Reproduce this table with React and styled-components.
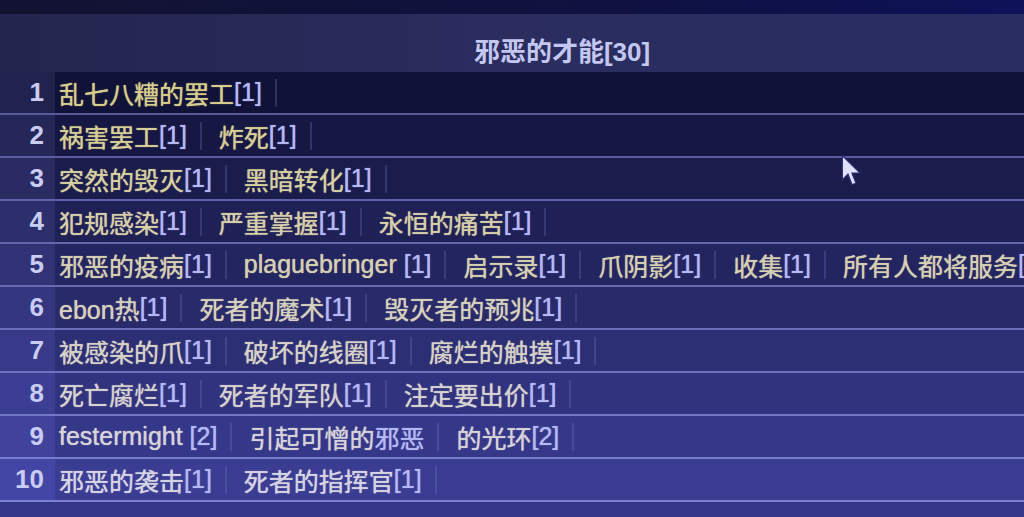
import React from "react";
import styled, { createGlobalStyle } from "styled-components";

const rows = [
  [{ t: "乱七八糟的罢工", n: 1 }],
  [{ t: "祸害罢工", n: 1 }, { t: "炸死", n: 1 }],
  [{ t: "突然的毁灭", n: 1 }, { t: "黑暗转化", n: 1 }],
  [{ t: "犯规感染", n: 1 }, { t: "严重掌握", n: 1 }, { t: "永恒的痛苦", n: 1 }],
  [
    { t: "邪恶的疫病", n: 1 },
    { t: "plaguebringer ", n: 1 },
    { t: "启示录", n: 1 },
    { t: "爪阴影", n: 1 },
    { t: "收集", n: 1 },
    { t: "所有人都将服务", n: 1 },
  ],
  [{ t: "ebon热", n: 1 }, { t: "死者的魔术", n: 1 }, { t: "毁灭者的预兆", n: 1 }],
  [{ t: "被感染的爪", n: 1 }, { t: "破坏的线圈", n: 1 }, { t: "腐烂的触摸", n: 1 }],
  [{ t: "死亡腐烂", n: 1 }, { t: "死者的军队", n: 1 }, { t: "注定要出价", n: 1 }],
  [{ t: "festermight ", n: 2 }, { t: "引起可憎的", hl: "邪恶" }, { t: "的光环", n: 2 }],
  [{ t: "邪恶的袭击", n: 1 }, { t: "死者的指挥官", n: 1 }],
];

// screen photo gets lighter / bluer towards the bottom
function mix(a, b, t) {
  const pa = a.match(/\w\w/g).map((h) => parseInt(h, 16));
  const pb = b.match(/\w\w/g).map((h) => parseInt(h, 16));
  const c = pa.map((v, i) => Math.round(v + (pb[i] - v) * t));
  return `rgb(${c.join(",")})`;
}

const GlobalStyle = createGlobalStyle`
  html, body {
    margin: 0;
    padding: 0;
    background: #0e1033;
  }
`;

const Page = styled.div`
  width: 1024px;
  height: 517px;
  overflow: hidden;
  position: relative;
  display: flex;
  flex-direction: column;
  background: #35368a;
  font-family: "Liberation Sans", "Noto Sans CJK SC", sans-serif;
`;

const TopStrip = styled.div`
  height: 14px;
  flex: none;
  background: linear-gradient(90deg, #121332 0%, #0f1140 60%, #0e1258 100%);
`;

const Header = styled.div`
  height: 58px;
  flex: none;
  box-sizing: border-box;
  display: flex;
  align-items: center;
  justify-content: center;
  padding: 12px 0 0 100px;
  background: linear-gradient(90deg, #23254e 0%, #2a2d5e 50%, #2a2d62 100%);
`;

const Title = styled.span`
  font-size: 26px;
  font-weight: bold;
  color: #c4c7f2;
`;

const Row = styled.div`
  height: 41px;
  flex: none;
  display: grid;
  grid-template-columns: 55px 1fr;
  border-bottom: 2px solid ${(p) => p.$line};
`;

const Num = styled.div`
  display: flex;
  align-items: center;
  justify-content: flex-end;
  padding-right: 11px;
  font-size: 26px;
  font-weight: bold;
  color: #c9ccf3;
  background: ${(p) => p.$bg};
`;

const Content = styled.div`
  display: flex;
  align-items: center;
  padding-left: 4px;
  white-space: nowrap;
  background: ${(p) => p.$bg};
`;

const Name = styled.span`
  font-size: 25px;
  white-space: pre;
  color: ${(p) => p.$color};
  text-shadow: 0 0 1px ${(p) => p.$color};
`;

const Count = styled.span`
  font-size: 25px;
  color: #b4b8f4;
  text-shadow: 0 0 1px #b4b8f4;
`;

const Sep = styled.span`
  flex: none;
  width: 2px;
  height: 28px;
  margin: 0 17px 0 13px;
  background: rgba(120, 126, 200, 0.28);
`;

const Cursor = styled.svg`
  position: absolute;
  left: 840px;
  top: 154px;
  width: 24px;
  height: 34px;
`;

export default function App() {
  return (
    <Page>
      <GlobalStyle />
      <TopStrip />
      <Header>
        <Title>邪恶的才能[30]</Title>
      </Header>
      {rows.map((items, i) => {
        const t = i / 9;
        return (
          <Row key={i} $line={mix("565a9a", "7b80d2", t)}>
            <Num $bg={mix("21234f", "4446a6", t)}>{i + 1}</Num>
            <Content $bg={mix("111238", "3a3d92", t)}>
              {items.map((it, j) => (
                <React.Fragment key={j}>
                  <Name $color={mix("d6cd8c", "d6d4e4", t)}>{it.t}</Name>
                  {it.hl && <Count>{it.hl}</Count>}
                  {it.n && <Count>[{it.n}]</Count>}
                  <Sep />
                </React.Fragment>
              ))}
            </Content>
          </Row>
        );
      })}
      <Cursor viewBox="0 0 14 21">
        <path
          d="M1 1 L1 16 L4.5 12.5 L7 19 L9.5 18 L7 11.8 L12 11.8 Z"
          fill="#dfe1ff"
          stroke="#2a2c70"
          strokeWidth="0.8"
        />
      </Cursor>
    </Page>
  );
}
